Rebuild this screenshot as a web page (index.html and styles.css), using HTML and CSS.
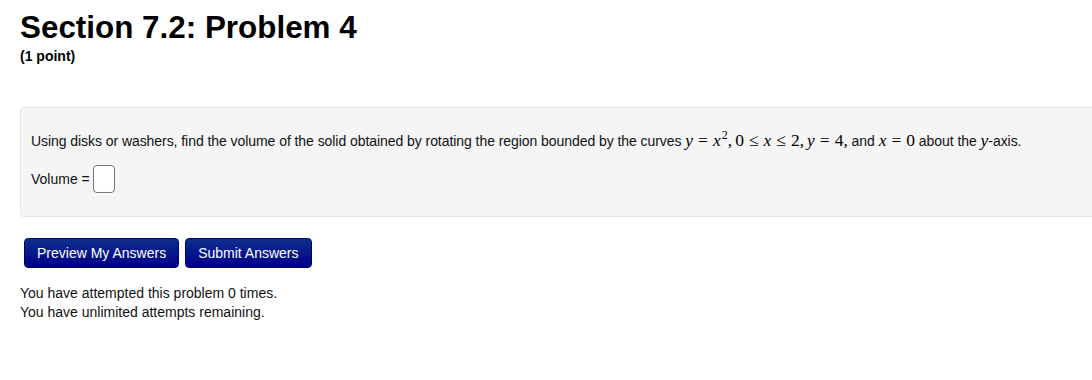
FILE: index.html
```html
<!DOCTYPE html>
<html>
<head>
<meta charset="utf-8">
<link rel="stylesheet" href="styles.css">
<title>Section 7.2: Problem 4</title>
</head>
<body>
<div class="page">
  <h1 class="title">Section 7.2: Problem 4</h1>
  <div class="points">(1 point)</div>

  <div class="well">
    <p class="statement">Using disks or washers, find the volume of the solid obtained by rotating the region bounded by the curves <span class="math"><i>y</i><span class="op">=</span><i>x</i><sup>2</sup><span class="comma">,</span>0<span class="op">≤</span><i>x</i><span class="op">≤</span>2<span class="comma">,</span><i>y</i><span class="op">=</span>4<span class="comma-last">,</span></span> and <span class="math"><i>x</i><span class="op">=</span>0</span> about the <span class="math"><i>y</i></span>-axis.</p>
    <div class="answer-row">
      <label class="answer-label" for="ans">Volume =</label>
      <input class="answer-input" id="ans" type="text">
    </div>
  </div>

  <div class="buttons">
    <button class="btn">Preview My Answers</button>
    <button class="btn">Submit Answers</button>
  </div>

  <div class="attempts">
    <div>You have attempted this problem 0 times.</div>
    <div>You have unlimited attempts remaining.</div>
  </div>
</div>
</body>
</html>
```

FILE: styles.css
```css
html, body {
  margin: 0;
  padding: 0;
  background: #fff;
  overflow: hidden;
}
body {
  font-family: "Liberation Sans", Arial, sans-serif;
  font-size: 14px;
  line-height: 20px;
  color: #111;
}
.page {
  padding-left: 20px;
}
.title {
  margin: 11px 0 0 0;
  font-size: 31.4px;
  line-height: 34px;
  font-weight: bold;
  color: #000;
}
.points {
  margin-top: 1px;
  font-size: 14px;
  font-weight: bold;
  line-height: 20px;
  color: #000;
}
.well {
  margin-top: 41px;
  width: 1100px;
  box-sizing: border-box;
  background: #f5f5f5;
  border: 1px solid #e3e3e3;
  border-radius: 4px;
  padding: 23px 10px 23px 10px;
}
.statement {
  margin: 0 0 14px 0;
  height: 20px;
  white-space: nowrap;
  letter-spacing: -0.06px;
}
.math {
  font-family: "Liberation Serif", "Times New Roman", serif;
  font-size: 17.5px;
  line-height: 1;
  letter-spacing: 0;
  color: #000;
}
.math i {
  font-style: italic;
}
.math sup {
  font-size: 12px;
  line-height: 0;
  vertical-align: 7px;
  margin-left: 1px;
}
.op {
  padding: 0 5px;
}
.comma {
  padding-right: 3px;
}
.answer-row {
  display: flex;
  align-items: center;
  gap: 3px;
  height: 28px;
}
.answer-input {
  width: 22px;
  height: 28px;
  box-sizing: border-box;
  margin: 0;
  padding: 0;
  border: 1px solid #777;
  border-radius: 4px;
  background: #fff;
}
.buttons {
  display: flex;
  gap: 6px;
  margin: 21px 0 0 4px;
}
.btn {
  font-family: "Liberation Sans", Arial, sans-serif;
  font-size: 14px;
  line-height: 20px;
  color: #fff;
  padding: 4px 12px;
  border: 1px solid #00006e;
  border-radius: 4px;
  background: linear-gradient(#0d2f8c, #00008b);
  cursor: pointer;
}
.attempts {
  margin-top: 16px;
  line-height: 19px;
}
```
